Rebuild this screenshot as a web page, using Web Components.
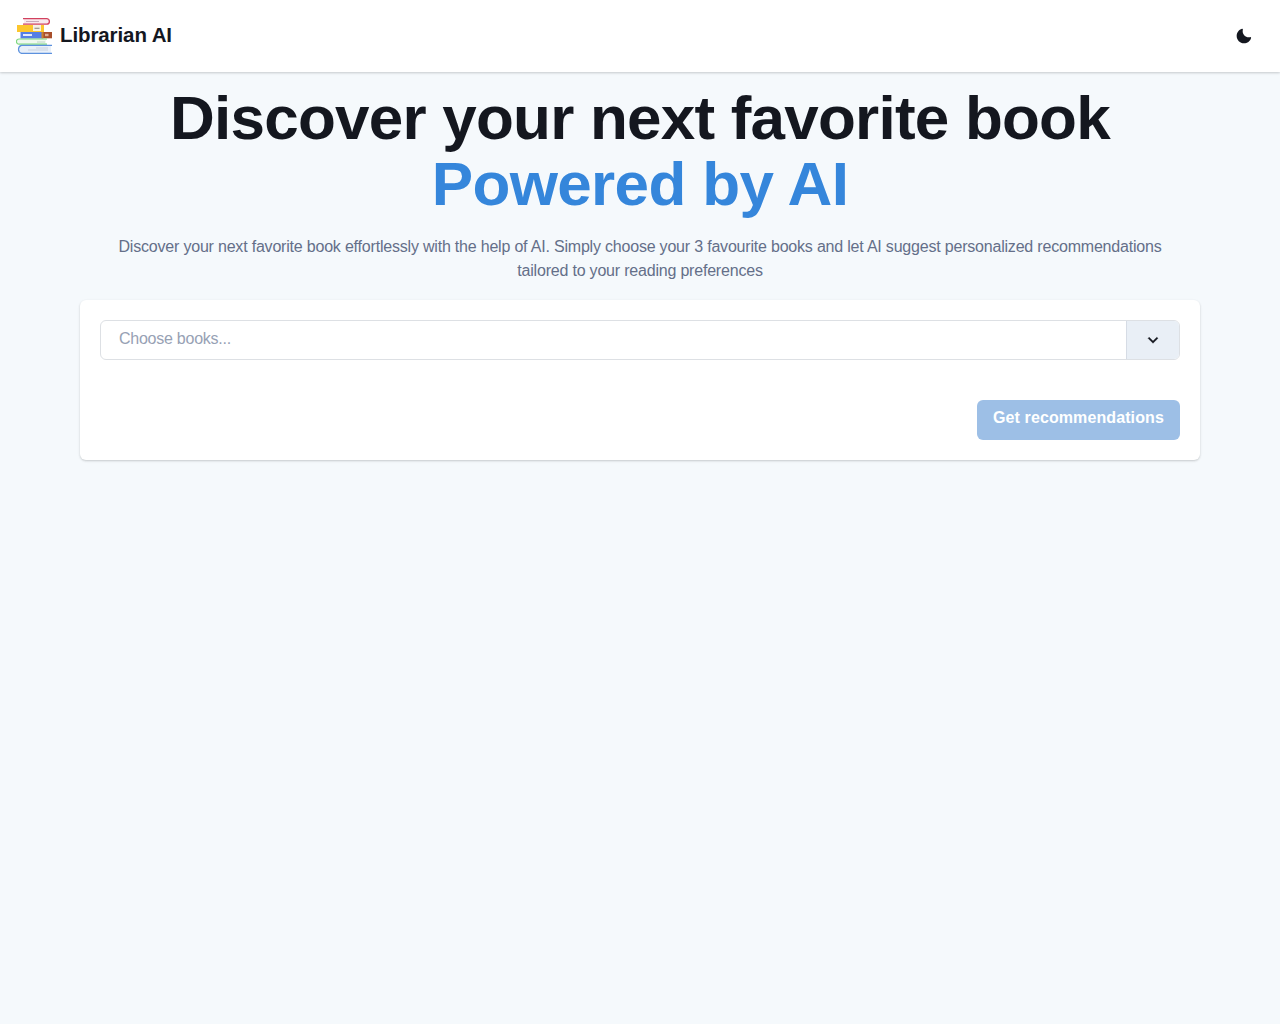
<!DOCTYPE html>
<html lang="en">
<head>
<meta charset="utf-8">
<title>Librarian AI</title>
<style>
  body {
    margin: 0;
    min-height: 100vh;
    background: #f5f9fc;
    color: #14171f;
    font: 16px/24px "Liberation Sans", Arial, sans-serif;
  }
</style>
</head>
<body>
<librarian-app></librarian-app>
<script>
  class BaseElement extends HTMLElement {
    constructor() {
      super();
      this.attachShadow({ mode: "open" });
    }
    connectedCallback() {
      this.shadowRoot.innerHTML = this.render();
    }
  }

  class BookLogo extends BaseElement {
    render() {
      return `
        <style>
          :host { display: block; width: 36px; height: 36px; }
          svg { display: block; }
        </style>
        <svg width="36" height="36" viewBox="0 0 36 36" fill="none">
          <path d="M8 1h22.500a2.500 2.500 0 0 1 0 5H8z" fill="#f8e9ed"/>
          <path d="M10 3.500h13" stroke="#c9a9ba" stroke-width="1"/>
          <path d="M7 .7h23.700a2.600 2.600 0 0 1 0 5.400H7" stroke="#d2415f" stroke-width="1.300"/>
          <path d="M1 7h27v7H1z" fill="#fcc62d"/>
          <path d="M17 7h8v6h-8z" fill="#f5f1e4"/>
          <path d="M18.500 10.300h5" stroke="#99958d" stroke-width="1.200"/>
          <path d="M4.500 14h22v6.500h-22z" fill="#557fe5"/>
          <path d="M7 16h9v2H7z" fill="#e3eafb"/>
          <path d="M26 14h10v6.300H26z" fill="#a84f2b"/>
          <path d="M29 15.800h3.500v2.400H29z" fill="#e0ae94"/>
          <path d="M25.500 14h2v6.300h-2z" fill="#c9812f"/>
          <path d="M3 21h27v5H3a2.500 2.500 0 0 1 0-5z" fill="#eff8ee"/>
          <path d="M21 24h8" stroke="#b8cfc0" stroke-width=".9"/>
          <path d="M31 21H3a2.400 2.400 0 0 0 0 5.200h28" stroke="#7fd880" stroke-width="1.200"/>
          <path d="M5.500 27.500H35v8H5.500c-4-1-4-7 0-8z" fill="#e9f0f9"/>
          <path d="M20 30h12M12 32h20" stroke="#c0cbdc" stroke-width=".8"/>
          <path d="M36 27.300H5.500c-4 1-4 7 0 8.100H36" stroke="#5c91de" stroke-width="1.200"/>
        </svg>
      `;
    }
  }
  customElements.define("book-logo", BookLogo);

  class ThemeToggle extends BaseElement {
    render() {
      return `
        <style>
          :host { display: block; }
          button {
            display: grid;
            place-items: center;
            width: 40px;
            height: 40px;
            padding: 0;
            border: 0;
            border-radius: 6px;
            background: none;
            color: #14171f;
          }
          svg { display: block; }
        </style>
        <button aria-label="Toggle theme">
          <svg width="16" height="16" viewBox="0 0 24 24">
            <path fill="currentColor" d="M21.400 13.700C20.600 13.900 19.800 14 19 14c-5 0-9-4-9-9 0-.8.1-1.600.3-2.400.1-.3 0-.7-.3-1-.3-.3-.6-.4-1-.3C4.300 2.700 1 7.100 1 12c0 6.100 4.900 11 11 11 4.900 0 9.300-3.300 10.600-8.100.1-.3 0-.7-.3-1-.2-.2-.6-.3-.9-.2z"/>
          </svg>
        </button>
      `;
    }
  }
  customElements.define("theme-toggle", ThemeToggle);

  class AppNavbar extends BaseElement {
    render() {
      return `
        <style>
          :host { display: block; }
          header {
            display: flex;
            align-items: center;
            justify-content: space-between;
            box-sizing: border-box;
            height: 72px;
            padding: 0 16px;
            background: #fff;
            box-shadow: 0 1px 3px rgba(0, 0, 0, .1), 0 1px 2px rgba(0, 0, 0, .1);
          }
          .brand { display: flex; align-items: center; gap: 8px; }
          .name {
            padding-bottom: 2px;
            font-size: 20.5px;
            font-weight: 700;
            line-height: 24px;
            letter-spacing: -.1px;
          }
        </style>
        <header>
          <div class="brand">
            <book-logo></book-logo>
            <span class="name"><slot></slot></span>
          </div>
          <theme-toggle></theme-toggle>
        </header>
      `;
    }
  }
  customElements.define("app-navbar", AppNavbar);

  class HeroBanner extends BaseElement {
    render() {
      return `
        <style>
          :host { display: block; text-align: center; }
          h1 {
            margin: 0;
            font-size: 62px;
            font-weight: 700;
            line-height: 66px;
            letter-spacing: -.78px;
          }
          h1 span { display: block; }
          .accent { color: #3586db; letter-spacing: -.65px; }
          p {
            margin: 18px 0 0;
            padding: 0 20px;
            color: #646f89;
            letter-spacing: -.2px;
          }
        </style>
        <h1>
          <span><slot name="title"></slot></span>
          <span class="accent"><slot name="accent"></slot></span>
        </h1>
        <p><slot></slot></p>
      `;
    }
  }
  customElements.define("hero-banner", HeroBanner);

  class BookSelect extends BaseElement {
    render() {
      return `
        <style>
          :host { display: block; }
          .control {
            display: flex;
            box-sizing: border-box;
            height: 40px;
            overflow: hidden;
            border: 1px solid #dde0e4;
            border-radius: 6px;
          }
          .placeholder {
            flex: 1;
            padding: 6px 18px;
            color: #97a1b4;
            letter-spacing: -.25px;
          }
          .indicator {
            display: grid;
            place-items: center;
            width: 52px;
            border-left: 1px solid #d6dce5;
            background: #e9eff6;
          }
        </style>
        <div class="control">
          <div class="placeholder"><slot></slot></div>
          <div class="indicator">
            <svg width="20" height="20" viewBox="0 0 24 24">
              <path fill="#14171f" stroke="#14171f" stroke-width=".4" d="M16.590 8.590L12 13.170 7.410 8.590 6 10l6 6 6-6z"/>
            </svg>
          </div>
        </div>
      `;
    }
  }
  customElements.define("book-select", BookSelect);

  class ActionButton extends BaseElement {
    render() {
      return `
        <style>
          :host { display: block; }
          button {
            box-sizing: border-box;
            width: 203px;
            height: 40px;
            padding: 0 0 5px;
            border: 0;
            border-radius: 6px;
            background: #9dbfe6;
            color: #fff;
            font: inherit;
            font-weight: 700;
            letter-spacing: .1px;
            white-space: nowrap;
          }
        </style>
        <button><slot></slot></button>
      `;
    }
  }
  customElements.define("action-button", ActionButton);

  class BookCard extends BaseElement {
    render() {
      return `
        <style>
          :host {
            display: block;
            padding: 20px;
            border-radius: 6px;
            background: #fff;
            box-shadow: 0 1px 3px rgba(0, 0, 0, .1), 0 1px 2px rgba(0, 0, 0, .1);
          }
          footer { display: flex; justify-content: flex-end; margin-top: 40px; }
        </style>
        <slot></slot>
        <footer><slot name="actions"></slot></footer>
      `;
    }
  }
  customElements.define("book-card", BookCard);

  class LibrarianApp extends BaseElement {
    render() {
      return `
        <style>
          :host { display: block; }
          main { width: 1120px; margin: 0 auto; padding-top: 13px; }
          book-card { margin-top: 17px; }
        </style>
        <app-navbar>Librarian AI</app-navbar>
        <main>
          <hero-banner>
            <span slot="title">Discover your next favorite book</span>
            <span slot="accent">Powered by AI</span>
            Discover your next favorite book effortlessly with the help of AI. Simply choose your 3 favourite books and let AI suggest personalized recommendations tailored to your reading preferences
          </hero-banner>
          <book-card>
            <book-select>Choose books...</book-select>
            <action-button slot="actions">Get recommendations</action-button>
          </book-card>
        </main>
      `;
    }
  }
  customElements.define("librarian-app", LibrarianApp);
</script>
</body>
</html>
